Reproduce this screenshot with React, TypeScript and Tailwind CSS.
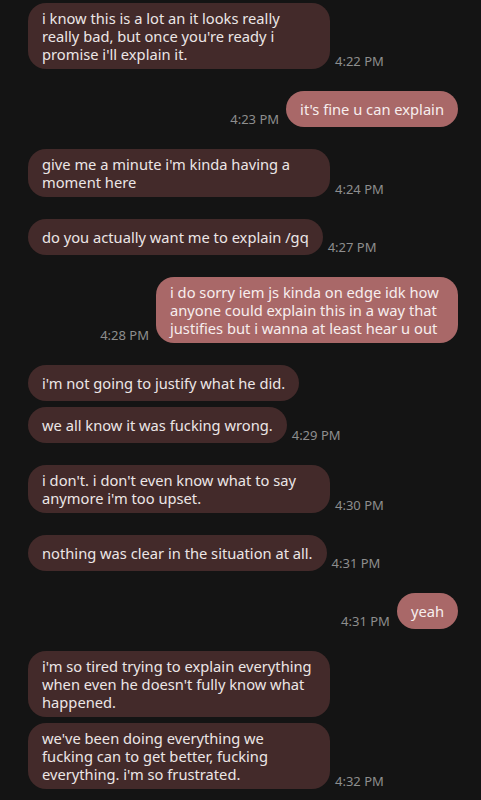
type Group = { me: boolean; time: string; texts: string[][] };

const groups: Group[] = [
  {
    me: false,
    time: "4:22 PM",
    texts: [["i know this is a lot an it looks really", "really bad, but once you're ready i", "promise i'll explain it."]],
  },
  { me: true, time: "4:23 PM", texts: [["it's fine u can explain"]] },
  { me: false, time: "4:24 PM", texts: [["give me a minute i'm kinda having a", "moment here"]] },
  { me: false, time: "4:27 PM", texts: [["do you actually want me to explain /gq"]] },
  {
    me: true,
    time: "4:28 PM",
    texts: [["i do sorry iem js kinda on edge idk how", "anyone could explain this in a way that", "justifies but i wanna at least hear u out"]],
  },
  {
    me: false,
    time: "4:29 PM",
    texts: [["i'm not going to justify what he did."], ["we all know it was fucking wrong."]],
  },
  { me: false, time: "4:30 PM", texts: [["i don't. i don't even know what to say", "anymore i'm too upset."]] },
  { me: false, time: "4:31 PM", texts: [["nothing was clear in the situation at all."]] },
  { me: true, time: "4:31 PM", texts: [["yeah"]] },
  {
    me: false,
    time: "4:32 PM",
    texts: [
      ["i'm so tired trying to explain everything", "when even he doesn't fully know what", "happened."],
      ["we've been doing everything we", "fucking can to get better, fucking", "everything. i'm so frustrated."],
    ],
  },
];

function Bubble({ me, lines }: { me: boolean; lines: string[] }) {
  const wide = lines.length > 1;
  const color = me ? "bg-[#a96868] text-[#f7eeee]" : "bg-[#432a2a] text-[#ece6e6]";
  return (
    <div
      className={clsxLite(
        "flex flex-col justify-center min-h-[36px] rounded-[18px] pl-[14px] py-[6px] text-[14.7px] leading-[18px] whitespace-nowrap",
        wide ? "w-[302px]" : "pr-[14px]",
        color
      )}
    >
      {lines.map((l, i) => (
        <span key={i}>{l}</span>
      ))}
    </div>
  );
}

function clsxLite(...c: string[]) {
  return c.join(" ");
}

export default function App() {
  return (
    <div
      className="min-h-[800px] w-[481px] bg-[#141414] pt-[3px] flex flex-col gap-[22px] overflow-hidden"
      style={{ fontFamily: '"Noto Sans", "Open Sans", sans-serif' }}
    >
      {groups.map((g, i) => (
        <div key={i} className="flex flex-col gap-[6px]">
          {g.texts.map((t, j) => {
            const last = j === g.texts.length - 1;
            return g.me ? (
              <div key={j} className="flex items-end justify-end pr-[23px]">
                {last && (
                  <span className="mr-[7px] text-[13px] leading-[16px] text-[#8e8e8e] whitespace-nowrap">
                    {g.time}
                  </span>
                )}
                <Bubble me lines={t} />
              </div>
            ) : (
              <div key={j} className="flex items-end pl-[28px]">
                <Bubble me={false} lines={t} />
                {last && (
                  <span className="ml-[5px] text-[13px] leading-[16px] text-[#8e8e8e] whitespace-nowrap">
                    {g.time}
                  </span>
                )}
              </div>
            );
          })}
        </div>
      ))}
    </div>
  );
}
